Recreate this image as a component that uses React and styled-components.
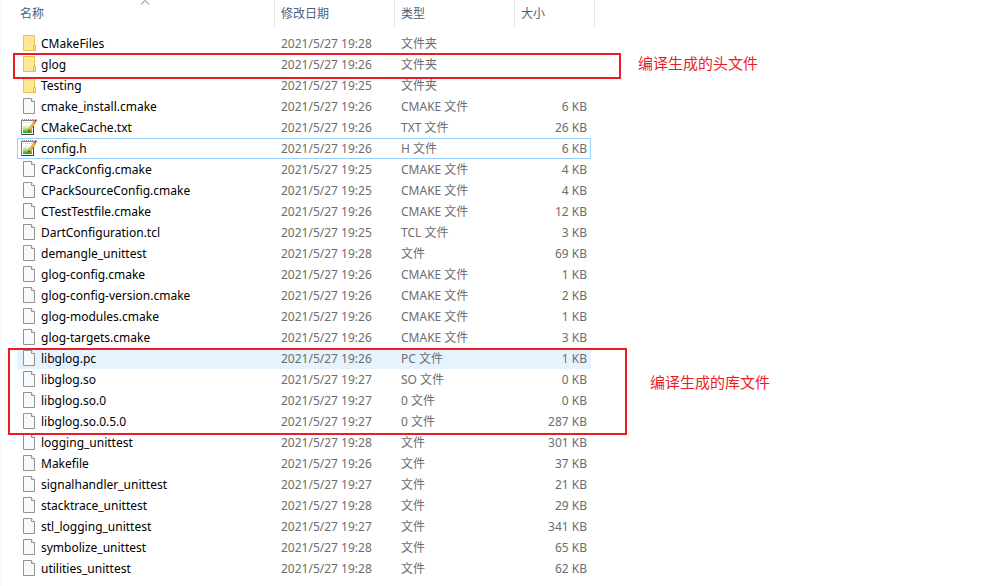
import styled, { createGlobalStyle } from "styled-components";

const GlobalStyle = createGlobalStyle`
  *{box-sizing:border-box;}
  body{
    margin:0;
    background:#fff;
    font-family:"Noto Sans", "Noto Sans CJK SC", sans-serif;
    font-size:12px;
    line-height:16px;
  }
`;

const Pane = styled.main`
  position: relative;
  min-height: 100vh;
  margin-left: 1px;
  padding-left: 15px;
  border-left: 1px solid #f5f5f5;
`;

const FileTable = styled.table`
  width: 578px;
  table-layout: fixed;
  border-collapse: separate;
  border-spacing: 0;
  thead:after{content:""; display:block; height:6px;}
`;

const Col = styled.col`
  width: ${({ $width }) => $width}px;
`;

const HeadCell = styled.th`
  position: relative;
  height: 27px;
  padding: 0;
  border-right: 1px solid #e5e5e5;
  font-weight: normal;
  text-align: left;
`;

const SortButton = styled.button`
  display: block;
  width: 100%;
  height: 27px;
  padding: 0 0 0 ${({ $first }) => ($first ? 3 : 6)}px;
  border: 0;
  background: none;
  color: #4c607a;
  font: inherit;
  text-align: left;
  cursor: pointer;
`;

const SortArrow = styled.svg`
  position: absolute;
  top: 0;
  left: 50%;
  margin-left: -6px;
`;

const rowColor = { focus: "#99d1ff", hover: "#e5f3ff" };

const Row = styled.tr`
  td{
    border: solid ${({ $state }) => rowColor[$state] || "transparent"};
    border-width: 1px 0;
    background: ${({ $state }) => ($state === "hover" ? "#e5f3ff" : "none")};
  }
  td:first-child{border-left-width:1px;}
  td:last-child{border-right-width:1px;}
`;

const Cell = styled.td`
  height: 21px;
  padding: 0 0 0 6px;
  color: #6d6d6d;
  white-space: nowrap;
`;

const NameCell = styled(Cell)`
  padding-left: 3px;
  color: #000;
`;

const SizeCell = styled(Cell)`
  padding: 0 3px 0 0;
  text-align: right;
`;

const FileName = styled.div`
  display: flex;
  align-items: flex-start;
  gap: 4px;
  line-height: 18px;
  svg{flex:none;}
`;

const Note = styled.div`
  position: absolute;
  top: ${({ $top }) => $top}px;
  left: ${({ $left }) => $left}px;
  display: flex;
  align-items: flex-start;
  gap: ${({ $gap }) => $gap}px;
  color: #ed1c24;
  font-size: 15px;
  line-height: 20px;
  white-space: nowrap;
  pointer-events: none;
`;

const NoteFrame = styled.div`
  width: ${({ $width }) => $width}px;
  height: ${({ $height }) => $height}px;
  border: 2px solid #ed1c24;
`;

const NoteText = styled.span`
  padding-top: ${({ $drop }) => $drop || 0}px;
`;

function FolderIcon() {
  return (
    <svg width="16" height="16" viewBox="0 0 16 16" aria-hidden="true">
      <path d="M2.5 .5h11v10h1v5h-12z" fill="#ffe794" stroke="#e9c34f" />
      <path d="M12.5 15v-4.5h2v5h-2z" fill="#ffe9a2" stroke="#e3bc48" />
    </svg>
  );
}

function PageIcon() {
  return (
    <svg width="16" height="16" viewBox="0 0 16 16" aria-hidden="true">
      <path d="M2.5 .5h8l3 3v12h-11z" fill="#f8f9fa" stroke="#929292" />
      <path d="M10.5 .5v3h3" fill="#fff" stroke="#929292" />
    </svg>
  );
}

function NotepadIcon() {
  return (
    <svg width="16" height="16" viewBox="0 0 16 16" aria-hidden="true">
      <defs>
        <linearGradient id="sheet" x1="0" y1="0" x2="0" y2="1">
          <stop offset="0" stopColor="#fff" />
          <stop offset=".3" stopColor="#e4f6cc" />
          <stop offset=".65" stopColor="#84d94c" />
          <stop offset="1" stopColor="#239a28" />
        </linearGradient>
      </defs>
      <path d="M.5 1.5h12v14h-12z" fill="#fff" stroke="#777" />
      <path d="M12.5 6v9.5H.5" fill="none" stroke="#444" />
      <path d="M2 5h9v9H2z" fill="url(#sheet)" />
      <path d="M1 1h11" stroke="#888" strokeWidth="2" strokeDasharray="1 1" />
      <path d="M2 3.5h10" stroke="#ccc" strokeDasharray="1 1" />
      <path d="M14 2.5L8.5 11" stroke="#b87920" strokeWidth="2.6" />
      <path d="M13.6 3L8.5 10.8" stroke="#ffb836" strokeWidth="1.8" />
      <path d="M7.4 10.2l2 1.3L7.2 13z" fill="#4b3a20" />
      <path d="M13.5 .5h2v2h-2z" fill="#8b1620" />
    </svg>
  );
}

const icons = { folder: FolderIcon, page: PageIcon, notepad: NotepadIcon };

// name, time, type, size, icon, state
const files = [
  ["CMakeFiles", "19:28", "文件夹", "", "folder"],
  ["glog", "19:26", "文件夹", "", "folder"],
  ["Testing", "19:25", "文件夹", "", "folder"],
  ["cmake_install.cmake", "19:26", "CMAKE 文件", "6 KB"],
  ["CMakeCache.txt", "19:26", "TXT 文件", "26 KB", "notepad"],
  ["config.h", "19:26", "H 文件", "6 KB", "notepad", "focus"],
  ["CPackConfig.cmake", "19:25", "CMAKE 文件", "4 KB"],
  ["CPackSourceConfig.cmake", "19:25", "CMAKE 文件", "4 KB"],
  ["CTestTestfile.cmake", "19:26", "CMAKE 文件", "12 KB"],
  ["DartConfiguration.tcl", "19:25", "TCL 文件", "3 KB"],
  ["demangle_unittest", "19:28", "文件", "69 KB"],
  ["glog-config.cmake", "19:26", "CMAKE 文件", "1 KB"],
  ["glog-config-version.cmake", "19:26", "CMAKE 文件", "2 KB"],
  ["glog-modules.cmake", "19:26", "CMAKE 文件", "1 KB"],
  ["glog-targets.cmake", "19:26", "CMAKE 文件", "3 KB"],
  ["libglog.pc", "19:26", "PC 文件", "1 KB", "page", "hover"],
  ["libglog.so", "19:27", "SO 文件", "0 KB"],
  ["libglog.so.0", "19:27", "0 文件", "0 KB"],
  ["libglog.so.0.5.0", "19:27", "0 文件", "287 KB"],
  ["logging_unittest", "19:28", "文件", "301 KB"],
  ["Makefile", "19:26", "文件", "37 KB"],
  ["signalhandler_unittest", "19:27", "文件", "21 KB"],
  ["stacktrace_unittest", "19:28", "文件", "29 KB"],
  ["stl_logging_unittest", "19:27", "文件", "341 KB"],
  ["symbolize_unittest", "19:28", "文件", "65 KB"],
  ["utilities_unittest", "19:28", "文件", "62 KB"],
];

function FileRow({ file }) {
  const [name, time, type, size, icon = "page", state] = file;
  const Icon = icons[icon];
  return (
    <Row $state={state}>
      <NameCell>
        <FileName>
          <Icon />
          {name}
        </FileName>
      </NameCell>
      <Cell>2021/5/27 {time}</Cell>
      <Cell>{type}</Cell>
      <SizeCell>{size}</SizeCell>
    </Row>
  );
}

export default function App() {
  return (
    <>
      <GlobalStyle />
      <Pane lang="zh-CN">
        <FileTable>
          <colgroup>
            <Col $width={258} />
            <Col $width={120} />
            <Col $width={120} />
            <Col $width={76} />
            <Col $width={4} />
          </colgroup>
          <thead>
            <tr>
              <HeadCell aria-sort="ascending">
                <SortButton type="button" $first>名称</SortButton>
                <SortArrow width="10" height="5" viewBox="0 0 10 5" aria-hidden="true">
                  <path d="M1 4.5l4-4 4 4" fill="none" stroke="#6d6d6d" />
                </SortArrow>
              </HeadCell>
              <HeadCell><SortButton type="button">修改日期</SortButton></HeadCell>
              <HeadCell><SortButton type="button">类型</SortButton></HeadCell>
              <HeadCell colSpan={2}><SortButton type="button">大小</SortButton></HeadCell>
            </tr>
          </thead>
          <tbody>
            {files.map((file) => (
              <FileRow key={file[0]} file={file} />
            ))}
          </tbody>
        </FileTable>
        <Note $top={53} $left={11} $gap={17}>
          <NoteFrame $width={608} $height={26} />
          <NoteText>编译生成的头文件</NoteText>
        </Note>
        <Note $top={348} $left={6} $gap={23}>
          <NoteFrame $width={619} $height={87} />
          <NoteText $drop={24}>编译生成的库文件</NoteText>
        </Note>
      </Pane>
    </>
  );
}
